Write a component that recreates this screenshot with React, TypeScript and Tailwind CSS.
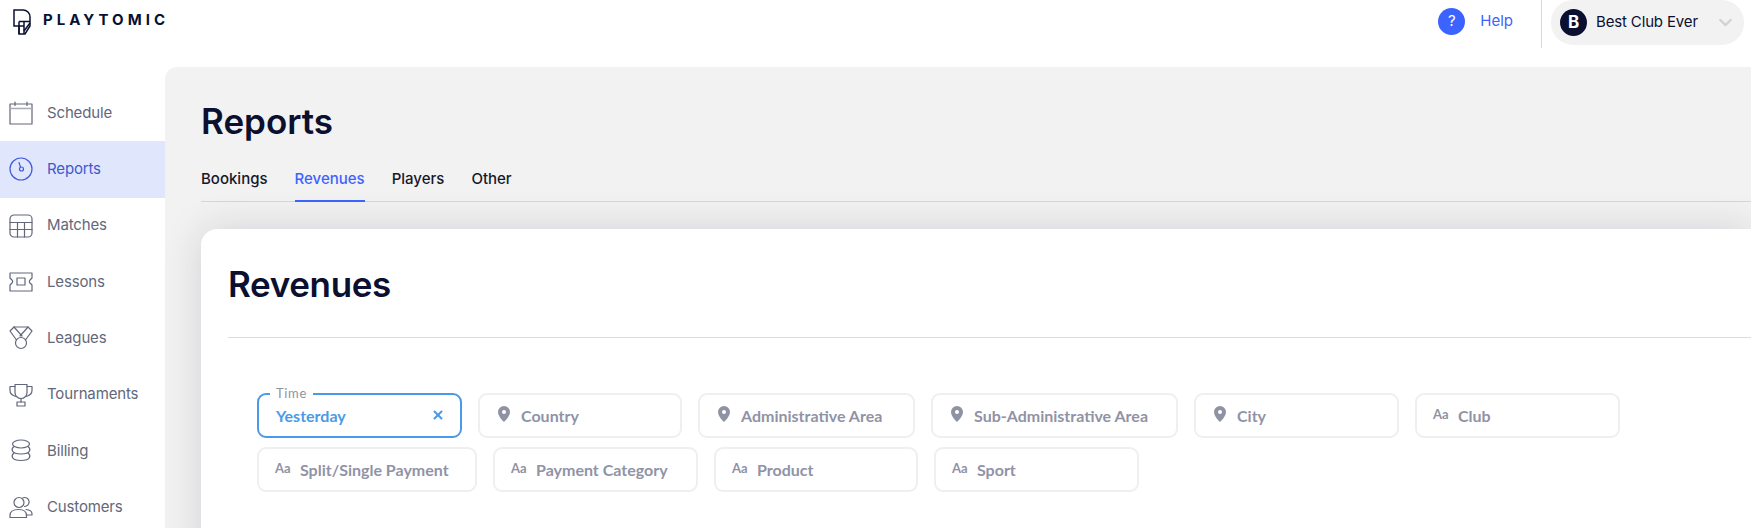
import type { ReactNode } from "react";
import { ChevronDown, X } from "lucide-react";

const stroke = {
  fill: "none",
  stroke: "currentColor",
  strokeWidth: 1.2,
  strokeLinecap: "round" as const,
  strokeLinejoin: "round" as const,
};

function NavSvg({ children }: { children: ReactNode }) {
  return (
    <svg width="24" height="24" viewBox="0 0 24 24" className="shrink-0" {...stroke}>
      {children}
    </svg>
  );
}

const navItems: { label: string; active?: boolean; icon: ReactNode }[] = [
  {
    label: "Schedule",
    icon: (
      <NavSvg>
        <path d="M1 3h22v20H1z" />
        <path d="M1 7.5h22" strokeWidth="1.6" stroke="#a9abb5" />
        <path d="M6 1v3.5M18 1v3.5" />
      </NavSvg>
    ),
  },
  {
    label: "Reports",
    active: true,
    icon: (
      <NavSvg>
        <circle cx="12" cy="12" r="11" />
        <circle cx="12.5" cy="12" r="2" />
        <path d="M11.5 10.3 10 5.5" />
      </NavSvg>
    ),
  },
  {
    label: "Matches",
    icon: (
      <NavSvg>
        <rect x="1" y="1" width="22" height="22" rx="4" />
        <path d="M1 8.5h22M1 15.5h22M8.5 8.5V23M15.5 8.5V23" />
      </NavSvg>
    ),
  },
  {
    label: "Lessons",
    icon: (
      <NavSvg>
        <path d="M1 3h22v5l-2 2a2 2 0 0 0 0 3l2 2v6H1v-6l2-2a2 2 0 0 0 0-3L1 8z" />
        <rect x="8" y="8" width="8" height="7" />
      </NavSvg>
    ),
  },
  {
    label: "Leagues",
    icon: (
      <NavSvg>
        <path d="M5 1h14l4 4-6.5 9M7.5 14 1 5l4-4" />
        <path d="m5 1 8 9M19 1l-8 9" />
        <circle cx="12" cy="17" r="5.5" />
      </NavSvg>
    ),
  },
  {
    label: "Tournaments",
    icon: (
      <NavSvg>
        <path d="M6 1.5h12v8a6 6 0 0 1-12 0z" />
        <path d="M6 3.5H1v4c0 3 2 5 6 6M18 3.5h5v4c0 3-2 5-6 6" />
        <path d="M12 15.5V19" />
        <path d="M8 19h8v4H8z" />
      </NavSvg>
    ),
  },
  {
    label: "Billing",
    icon: (
      <NavSvg>
        <ellipse cx="12" cy="5" rx="8.5" ry="4" />
        <path d="M5 7.5C3 9 3 11 3.5 12c1 2 4.5 3 8.5 3s7.5-1 8.5-3c.5-1 .5-3-1.500-4.5" />
        <path d="M5 14C3 15.5 3 17.5 3.5 18.5c1 2 4.5 3 8.5 3s7.5-1 8.5-3c.5-1 .5-3-1.500-4.5" />
      </NavSvg>
    ),
  },
  {
    label: "Customers",
    icon: (
      <NavSvg>
        <circle cx="10" cy="7.5" r="5" />
        <path d="M14 2.8a4.5 4.5 0 1 1 1.5 8.7" />
        <path d="M1 22.5v-2c0-4 3-6 8.5-6s8 2 8 6v2z" />
        <path d="M17 14.5c3.5.3 6 1.8 6 4.5v1h-5.5" />
      </NavSvg>
    ),
  },
];

function PinIcon() {
  return (
    <svg width="14" height="16" viewBox="0 0 14 16" className="shrink-0">
      <path
        fillRule="evenodd"
        fill="#8f92a3"
        d="M7 0a6 6 0 0 1 6 6c0 3.5-3.5 7.5-6 10C4.5 13.5 1 9.5 1 6a6 6 0 0 1 6-6zm0 4a2 2 0 1 0 0 4 2 2 0 0 0 0-4z"
      />
    </svg>
  );
}

function Filter({ label, kind, width }: { label: string; kind: "pin" | "text"; width: string }) {
  return (
    <div className={`flex h-[45px] items-center rounded-[9px] border-2 border-[#efeff1] bg-white ${width} ${kind === "pin" ? "pl-[17px]" : "pl-[16px]"}`}>
      {kind === "pin" ? (
        <span className="mb-[3px] mr-[10px] flex"><PinIcon /></span>
      ) : (
        <span className="mb-[4px] mr-[8px] w-[17px] text-[13px] font-bold leading-[16px] text-[#8f92a3]">Aa</span>
      )}
      <span className="text-[16px] font-bold text-[#9093a6]">{label}</span>
    </div>
  );
}

export default function App() {
  return (
    <div className="flex h-[528px] flex-col overflow-hidden bg-white font-['Inter',sans-serif]">
      <header className="flex h-[67px] shrink-0 items-start justify-between">
        <div className="flex items-center pl-[13px] pt-[9px]">
          <svg width="18" height="26" viewBox="0 0 18 26" fill="none" stroke="#0b1030" strokeWidth="1.5">
            <path d="M1 1h9a7 7 0 0 1 7 7v9l-5 8H6v-8H1z" />
            <path d="M6 17h5M6 12.5h11M11 12.5V25M6 25V12.5" />
            <path d="m11 22 6-8" />
          </svg>
          <span className="mb-[3px] ml-[12px] text-[15px] font-bold tracking-[0.27em] text-[#0b1030]">PLAYTOMIC</span>
        </div>
        <div className="flex items-start">
          <div className="flex items-center pt-[8px]">
            <span className="flex h-[27px] w-[27px] items-center justify-center rounded-full bg-[#3d63ff] text-[15px] text-white">?</span>
            <span className="ml-[15px] text-[15px] text-[#3d63ff]">Help</span>
          </div>
          <div className="ml-[28px] h-[48px] w-px bg-[#d9d9dc]" />
          <div className="ml-[9px] mr-[7px] flex h-[45px] w-[193px] items-center rounded-[22px] bg-[#f2f2f2] pl-[9px]">
            <span className="flex h-[27px] w-[27px] items-center justify-center rounded-full bg-[#0b1030] text-[17px] font-bold text-white">B</span>
            <span className="ml-[9px] text-[15px] tracking-[-0.01em] text-[#0b1030]">Best Club Ever</span>
            <ChevronDown size={21} strokeWidth={2.5} className="ml-[17px] text-[#d2d2d4]" />
          </div>
        </div>
      </header>
      <div className="flex min-h-0 flex-1">
        <nav className="w-[165px] shrink-0 pt-[18px]">
          {navItems.map((item) => (
            <div
              key={item.label}
              className={`flex h-[56.3px] items-center pl-[9px] ${item.active ? "bg-[#e0e7fd] text-[#3f5ad8]" : "text-[#62677b]"}`}
            >
              {item.icon}
              <span className={`ml-[14px] text-[15px] tracking-[-0.01em] ${item.active ? "text-[#3f57cf]" : "text-[#62677b]"}`}>{item.label}</span>
            </div>
          ))}
        </nav>
        <main className="min-w-0 flex-1 rounded-tl-[12px] bg-[#f2f2f2] pl-[36px]">
          <h1 className="pt-[34px] text-[35px] font-semibold leading-[40px] text-[#0b1030]">Reports</h1>
          <div className="mt-[25px] flex h-[36px] gap-[27px] border-b border-[#d5d6dc] text-[15px] font-medium text-[#15182a]">
            <span className="pt-[2px]">Bookings</span>
            <span className="h-[36px] border-b-2 border-[#3d63ff] pt-[2px] text-[#3d63ff]">Revenues</span>
            <span className="pt-[2px]">Players</span>
            <span className="pt-[2px]">Other</span>
          </div>
          <section className="mt-[27px] h-[400px] rounded-tl-[16px] bg-white pl-[27px] shadow-[0_0_40px_rgba(30,30,60,0.14)]">
            <h2 className="pt-[32px] text-[35px] font-semibold leading-[46px] tracking-[-0.01em] text-[#0b1030]">Revenues</h2>
            <div className="mt-[30px] h-px bg-[#dcdde1]" />
            <div className="mt-[55px] flex flex-wrap gap-x-[16px] gap-y-[9px] pl-[29px] font-['Lato',sans-serif]">
              <div className="relative flex h-[45px] w-[205px] items-center justify-between rounded-[9px] border-2 border-[#4a9ae8] bg-white pl-[17px] pr-[15px]">
                <span className="absolute left-[11px] top-[-10px] bg-white px-[6px] text-[13px] leading-[16px] tracking-[0.05em] text-[#8f93a0]">Time</span>
                <span className="text-[16px] font-bold text-[#4a9ae8]">Yesterday</span>
                <X size={14} strokeWidth={3.5} className="mb-[2px] text-[#4a9ae8]" />
              </div>
              <Filter label="Country" kind="pin" width="w-[204px]" />
              <Filter label="Administrative Area" kind="pin" width="w-[217px]" />
              <Filter label="Sub-Administrative Area" kind="pin" width="w-[247px]" />
              <Filter label="City" kind="pin" width="w-[205px]" />
              <Filter label="Club" kind="text" width="w-[205px]" />
              <Filter label="Split/Single Payment" kind="text" width="w-[220px]" />
              <Filter label="Payment Category" kind="text" width="w-[205px]" />
              <Filter label="Product" kind="text" width="w-[204px]" />
              <Filter label="Sport" kind="text" width="w-[205px]" />
            </div>
          </section>
        </main>
      </div>
    </div>
  );
}
